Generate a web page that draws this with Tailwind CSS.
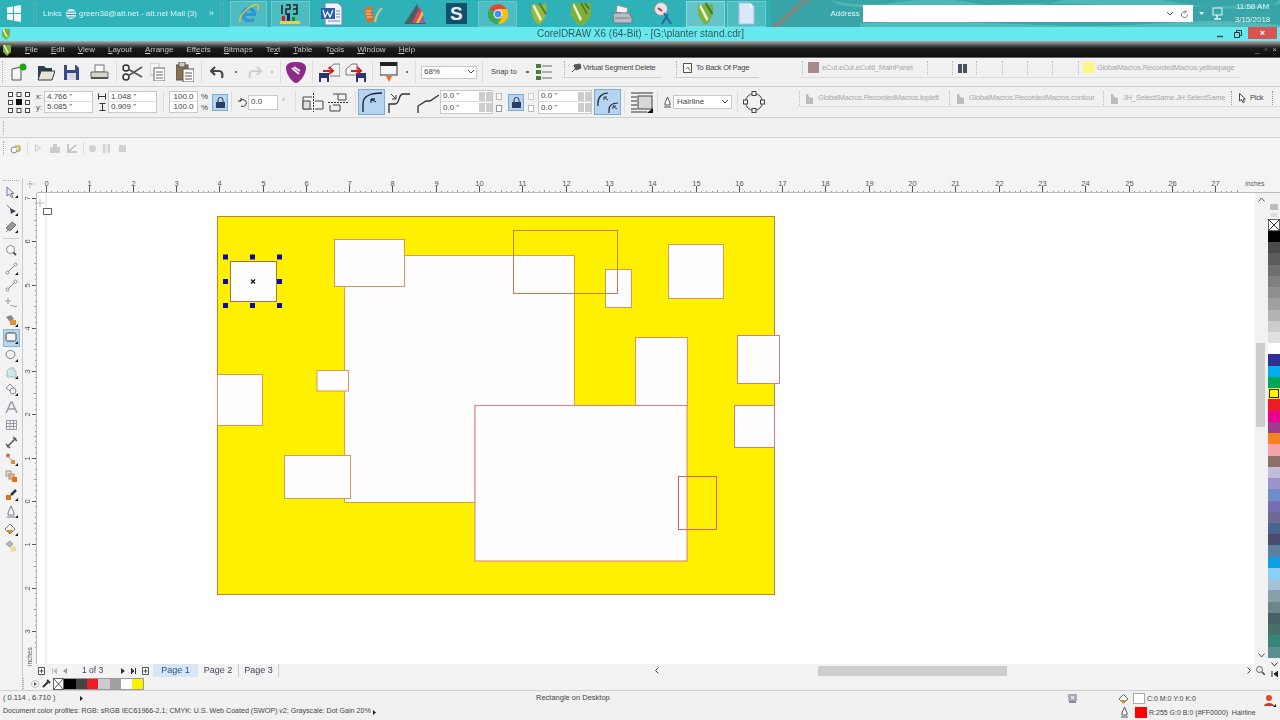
<!DOCTYPE html>
<html lang="en">
<head>
<meta charset="UTF-8">
<title>CorelDRAW X6 - planter stand</title>
<script src="https://cdn.jsdelivr.net/npm/@tailwindcss/browser@4"></script>
</head>
<body class="w-[1280px] h-[720px] overflow-hidden flex flex-col bg-[#f0f0f0] font-['Liberation_Sans',Arial,sans-serif] text-[8px] leading-none text-[#555] blur-[0.35px]">

<!-- windows taskbar -->
<div class="relative h-[27px] shrink-0 flex items-center bg-[#2fb2b7] text-[#dff6f6]">
  <svg class="absolute inset-0" width="1280" height="27" viewBox="0 0 1280 27">
    <rect x="770" width="510" height="27" fill="#3aa5a8"/>
    <path d="M811 0 L779 27 L770 27 L802 0Z" fill="#6d8d88"/>
    <path d="M830 0 Q860 8 900 2 T980 4 T1060 1 T1180 3 T1280 0 V4 Q1200 9 1100 5 T960 8 T840 5Z" fill="#5cc4c4" opacity=".6"/>
    <path d="M860 23 Q940 20 1020 24 T1160 23 T1280 25 V27 H860Z" fill="#62c6c6" opacity=".6"/>
  </svg>
  <div class="relative w-full flex items-center">
    <svg class="ml-[7px] shrink-0" width="14" height="17" viewBox="0 0 14 17"><path d="M0 2.500 6 1.500V8H0ZM7 1.300 14 0V8H7ZM0 9H6V15.500L0 14.500ZM7 9H14V17L7 15.700Z" fill="#f4fbfb"/></svg>
    <div class="ml-[12px] w-[4px] h-[22px] border-x border-dotted border-[#80a8a8]"></div>
    <span class="ml-[6px] w-[18px] text-[8px]">Links</span>
    <svg class="ml-[5px] shrink-0" width="10" height="10" viewBox="0 0 10 10"><circle cx="5" cy="5" r="5" fill="#dff3f7"/><path d="M1 3H9M.5 5.500H9.500M2 8H8" stroke="#3a8fb0"/></svg>
    <span class="ml-[3px] w-[130px] whitespace-nowrap text-[8px]">green38@att.net - att.net Mail (3)</span>
    <span class="w-[11px] text-[9px]">»</span>
    <div class="w-[4px] h-[22px] border-x border-dotted border-[#80a8a8]"></div>
    <div class="ml-[4px] shrink-0 flex items-center">
      <div class="w-[37px] h-[26px] ml-[2px] mr-[2.500px] flex items-center justify-center bg-white/15 border border-white/20">
        <svg width="22" height="22" viewBox="0 0 22 22"><path d="M18 13H7.500C8 16 12.500 17 16.500 14.500V18C11 21 3.500 19 3.500 12 3.500 6 9 3 13.500 4.500 17.500 6 18.500 9.500 18 13ZM7.500 10H14C13.800 6.500 8.500 6.500 7.500 10Z" fill="#2f97d8"/><path d="M2 19C0 14 9 4 18 1.500 21 1 21 4 19.500 7" fill="none" stroke="#f2c230" stroke-width="1.300"/></svg>
      </div>
      <div class="w-[39px] h-[26px] mx-[1.250px] flex items-center justify-center bg-white/15 border border-white/20">
        <svg width="24" height="24" viewBox="0 0 24 24"><rect x="2" y="19" width="20" height="3" fill="#e8d24a"/><rect x="4" y="14" width="3" height="5" fill="#c22"/><rect x="9" y="12" width="3" height="7" fill="#227"/><rect x="14" y="15" width="3" height="4" fill="#282"/><path d="M4 3V12M8 3H12V7H8V12H12M15 3H19V12H15M15 7H19" fill="none" stroke="#222" stroke-width="1.500"/></svg>
      </div>
      <div class="w-[41.500px] flex justify-center">
        <svg width="22" height="24" viewBox="0 0 22 24"><path d="M4 1H17L21 5V23H4Z" fill="#f2f6fb" stroke="#6d86ad"/><rect y="6" width="14" height="11" fill="#2b5ca8"/><path d="M2 8 4 15 6.500 10 9 15 12 8" fill="none" stroke="#fff" stroke-width="1.200"/><path d="M15 9H19M15 12H19M15 15H19M7 19H19" stroke="#6d86ad"/></svg>
      </div>
      <div class="w-[41.500px] flex justify-center">
        <svg width="24" height="24" viewBox="0 0 24 24"><path d="M3 7 11 4 13 19 6 21Z" fill="#d9702c"/><path d="M5 9H10M5 12H10M6 15H11" stroke="#f0d8b0"/><path d="M14 20C15 14 18 9 21 6" fill="none" stroke="#c9c79a" stroke-width="2"/></svg>
      </div>
      <div class="w-[41.500px] flex justify-center">
        <svg width="24" height="24" viewBox="0 0 24 24"><path d="M1 22 14 2 23 22Z" fill="#4c5f62"/><path d="M9 21 17 5 19 9 13 21Z" fill="#e2465e"/><path d="M13 21 19 9 20.500 13 16 21Z" fill="#e8c13c"/><path d="M16 21 20.500 13 22 21Z" fill="#8e5fc0"/></svg>
      </div>
      <div class="w-[41.500px] flex justify-center">
        <div class="w-[21px] h-[21px] bg-[#12506a] flex items-center justify-center text-[#eef] text-[19px] font-bold">S</div>
      </div>
      <div class="w-[39px] h-[26px] mx-[1.250px] flex items-center justify-center bg-white/15 border border-white/15">
        <svg width="20" height="20" viewBox="0 0 20 20"><circle cx="10" cy="10" r="10" fill="#dd4b3e"/><path d="M10 10 1.300 5A10 10 0 0 0 10 20L14 13Z" fill="#3aa757"/><path d="M10 5H19A10 10 0 0 1 10 20L14 13Z" fill="#f4c20d"/><circle cx="10" cy="10" r="4.500" fill="#fff"/><circle cx="10" cy="10" r="3.500" fill="#4a8df0"/></svg>
      </div>
      <div class="w-[41.500px] flex justify-center">
        <svg width="18" height="24" viewBox="0 0 18 24"><path d="M2 2C0 10 3 19 9 23 15 19 18 10 16 1 13 4 6 3 2 2Z" fill="#9ab83c"/><path d="M4 2 12 17 10 19 3 5Z" fill="#f2f4d8"/><path d="M9 1 16 12" stroke="#4e7d2c" stroke-width="2"/></svg>
      </div>
      <div class="w-[41.500px] flex justify-center">
        <svg width="20" height="24" viewBox="0 0 20 24"><path d="M0 1H20V14L13 23H7L0 14Z" fill="#7fae3a"/><path d="M3 1 11 17 9 19 2 4Z" fill="#eef5d5"/><path d="M10 1 16 12M14 1 18 7" stroke="#3f7327" stroke-width="1.500"/></svg>
      </div>
      <div class="w-[41.500px] flex justify-center">
        <svg width="22" height="22" viewBox="0 0 22 22"><path d="M6 2 17 5 16 11 5 9Z" fill="#f0f0f0" stroke="#889"/><path d="M2 10 18 10 21 15V20H3Z" fill="#b8bfc6" stroke="#778"/><path d="M4 15H19" stroke="#778"/></svg>
      </div>
      <div class="w-[41.500px] flex justify-center">
        <svg width="22" height="24" viewBox="0 0 22 24"><circle cx="8" cy="7" r="6.500" fill="#e6e4ea" stroke="#998"/><path d="M5 6 9 9" stroke="#b33" stroke-width="2"/><path d="M11 11 18 22M15 12 9 22" stroke="#2b66b0" stroke-width="2"/></svg>
      </div>
      <div class="w-[39px] h-[26px] mx-[1.250px] flex items-center justify-center bg-white/25 border border-white/30">
        <svg width="19" height="24" viewBox="0 0 18 24"><path d="M2 2C0 10 3 19 9 23 15 19 18 10 16 1 13 4 6 3 2 2Z" fill="#7fb23c"/><path d="M4 2 12 17 10 19 3 5Z" fill="#f2f4d8"/><path d="M9 1 16 12" stroke="#3f7327" stroke-width="2"/></svg>
      </div>
      <div class="w-[39px] h-[26px] mx-[1.250px] flex items-center justify-center bg-white/15 border border-white/20">
        <svg width="17" height="23" viewBox="0 0 17 23"><path d="M1 1H12L16 5V22H1Z" fill="#dbe6f8" stroke="#a9c0e4"/><path d="M12 1V5H16Z" fill="#fff"/></svg>
      </div>
    </div>
    <span class="ml-[63px] w-[28px] text-[8px] whitespace-nowrap">Address</span>
    <div class="ml-[4px] w-[330px] shrink-0 h-[17px] bg-white flex items-center justify-end pr-[5px] gap-[8px] text-[#666]">
      <svg width="6" height="4" viewBox="0 0 6 4"><path d="M0 0 3 3 6 0" fill="none" stroke="#555"/></svg>
      <svg width="7" height="8" viewBox="0 0 7 8"><path d="M5 2A3 3 0 1 0 6.500 4.500M4 .5 5.500 2 3.500 3.500" fill="none" stroke="#777"/></svg>
    </div>
    <svg class="ml-[6px] shrink-0" width="5" height="3" viewBox="0 0 5 3"><path d="M0 0H5L2.500 3Z" fill="#dff"/></svg>
    <svg class="ml-[8px] shrink-0" width="12" height="13" viewBox="0 0 12 13"><rect x="1" y="1" width="9" height="7" fill="none" stroke="#e8f8f8"/><path d="M5 8V12M2 12H9" stroke="#e8f8f8" stroke-width="1.500"/></svg>
    <div class="ml-[11px] flex flex-col items-center gap-[5px] w-[36px] text-[8px] whitespace-nowrap"><span>11:58 AM</span><span>3/15/2018</span></div>
  </div>
</div>

<!-- window title -->
<div class="relative h-[14px] shrink-0 flex items-center bg-[#66e9ee] text-[#33595c]">
  <svg class="ml-[2px] shrink-0" width="8" height="11" viewBox="0 0 8 11"><path d="M0 0H8V7L4 11 0 7Z" fill="#7fae3a"/><path d="M1 0 5 8" stroke="#eef5d5" stroke-width="1.500"/></svg>
  <span class="ml-[527px] text-[10px] whitespace-nowrap">CorelDRAW X6 (64-Bit) - [G:\planter stand.cdr]</span>
  <svg width="6" height="8" viewBox="0 0 6 8" class="ml-auto mr-[11px]"><path d="M0 6.500H6" stroke="#444" stroke-width="1.500"/></svg>
  <svg width="8" height="8" viewBox="0 0 8 8" class="mr-[6px]"><path d="M.5 2.500H5.500V7.500H.5ZM2.500 2.500V.5H7.500V5.500H5.500" fill="none" stroke="#333"/></svg>
  <div class="w-[29px] h-[12px] mr-[3px] self-start bg-[#d9534f] flex items-center justify-center text-white text-[9px] font-bold">×</div>
</div>

<!-- menu bar -->
<div class="h-[17px] shrink-0 flex items-center gap-[13px] bg-gradient-to-b from-[#b0b0b0] via-[#1c1c1c] to-[#0d0d0d] via-45% text-[#c8c8c8] pl-[3px] pt-[2px] text-[8px] relative border-b border-[#666]">
  <svg class="-mr-[4px] shrink-0" width="8" height="11" viewBox="0 0 8 11"><path d="M0 0H8V7L4 11 0 7Z" fill="#7fae3a"/><path d="M1 0 5 8" stroke="#eef5d5" stroke-width="1.500"/></svg>
  <span class="ml-[5px]"><u>F</u>ile</span><span><u>E</u>dit</span><span><u>V</u>iew</span><span><u>L</u>ayout</span><span><u>A</u>rrange</span><span>Eff<u>e</u>cts</span><span><u>B</u>itmaps</span><span>Te<u>x</u>t</span><span><u>T</u>able</span><span>T<u>o</u>ols</span><span><u>W</u>indow</span><span><u>H</u>elp</span>
  <div class="ml-auto mr-[3px] flex items-center gap-[5px] text-[#aaa]"><span>_</span><span>▫</span><span>×</span></div>
</div>

<!-- standard toolbar -->
<div class="h-[29px] shrink-0 flex items-center border-b border-[#cfcfcf] bg-[#f1f1f1]">
  <div class="ml-[2px] w-px h-[22px] border-l border-dotted border-[#aaa]"></div>
  <svg class="ml-[7px] shrink-0" width="18" height="18" viewBox="0 0 18 18"><path d="M2 6 11 4V17H2Z" fill="#f5f5f5" stroke="#555"/><circle cx="13" cy="4" r="3.500" fill="#1ca51c"/></svg>
  <svg class="ml-[9px] shrink-0" width="18" height="17" viewBox="0 0 18 17"><path d="M1 2H7L9 4H15V7H4L1 16Z" fill="#2b3d52"/><path d="M4 7H18L15 16H1Z" fill="#e8e2d0" stroke="#2b3d52"/></svg>
  <svg class="ml-[9px] shrink-0" width="15" height="15" viewBox="0 0 15 15"><path d="M0 0H12L15 3V15H0Z" fill="#3a4a88"/><rect x="3" y="0" width="8" height="5" fill="#f4f4f4"/><rect x="3" y="8" width="9" height="7" fill="#d8d8e8"/></svg>
  <svg class="ml-[11px] shrink-0" width="19" height="16" viewBox="0 0 19 16"><rect x="5" y="1" width="9" height="7" fill="#fff" stroke="#777"/><path d="M1 8H18V14H1Z" fill="#d7d6c2" stroke="#666"/><rect x="1" y="13" width="17" height="2" fill="#555"/></svg>
  <div class="ml-[7px] w-px h-[22px] bg-[#ddd]"></div>
  <svg class="ml-[5px] shrink-0" width="21" height="17" viewBox="0 0 21 17"><circle cx="4" cy="4" r="3" fill="none" stroke="#333" stroke-width="1.500"/><circle cx="4" cy="13" r="3" fill="none" stroke="#333" stroke-width="1.500"/><path d="M6 5 20 13M6 12 20 3" stroke="#555" stroke-width="1.500"/></svg>
  <svg class="ml-[7px] shrink-0" width="15" height="18" viewBox="0 0 15 18"><rect x="0" y="0" width="9" height="12" fill="#f4f4f4" stroke="#bbb"/><rect x="4" y="5" width="11" height="13" fill="#fff" stroke="#666"/><path d="M6 9H13M6 12H13M6 15H13" stroke="#666"/></svg>
  <svg class="ml-[11px] shrink-0" width="18" height="20" viewBox="0 0 18 20"><rect x="0" y="3" width="12" height="15" fill="#8c6f52" stroke="#554"/><rect x="3" y="0" width="6" height="5" fill="#ccc" stroke="#555"/><rect x="7" y="7" width="11" height="13" fill="#fff" stroke="#555"/><path d="M9 11H16M9 14H16M9 17H16" stroke="#555"/></svg>
  <div class="ml-[7px] w-px h-[22px] bg-[#ddd]"></div>
  <svg class="ml-[8px] shrink-0" width="14" height="13" viewBox="0 0 14 13"><path d="M5 1 1 5 5 9M1 5H9C12 5 13 8 12 12" fill="none" stroke="#444" stroke-width="2.200"/></svg>
  <span class="ml-[11px] w-[2px] h-[2px] bg-[#777]"></span>
  <svg class="ml-[11px] shrink-0" width="14" height="13" viewBox="0 0 14 13"><path d="M9 1 13 5 9 9M13 5H5C2 5 1 8 2 12" fill="none" stroke="#cfcfcf" stroke-width="2.200"/></svg>
  <span class="ml-[9px] w-[2px] h-[2px] bg-[#bbb]"></span>
  <div class="ml-[7px] w-px h-[22px] bg-[#ddd]"></div>
  <svg class="ml-[5px] shrink-0" width="20" height="21" viewBox="0 0 20 21"><path d="M10 0C15 0 20 1 20 6 20 13 13 21 10 21 7 21 0 13 0 6 0 1 5 0 10 0Z" fill="#8d2a85"/><path d="M6 6 13 12M8 5 14 9" stroke="#f3e5f3" stroke-width="2"/></svg>
  <div class="ml-[6px] w-px h-[22px] bg-[#ddd]"></div>
  <svg class="ml-[5px] shrink-0" width="22" height="19" viewBox="0 0 22 19"><path d="M10 6 16 1H22V13H12" fill="#f3f3f3" stroke="#777"/><rect x="1" y="10" width="10" height="9" fill="#2d3570"/><rect x="3" y="15" width="6" height="4" fill="#eee"/><path d="M5 8H14M11 4 15 8 11 11" fill="none" stroke="#d21f1f" stroke-width="2"/></svg>
  <svg class="ml-[5px] shrink-0" width="22" height="19" viewBox="0 0 22 19"><path d="M1 6 7 1H12V12H1Z" fill="#f3f3f3" stroke="#777"/><rect x="11" y="10" width="10" height="9" fill="#2d3570"/><rect x="13" y="15" width="6" height="4" fill="#eee"/><path d="M6 8H15M12 4 16 8 12 11" fill="none" stroke="#d21f1f" stroke-width="2"/></svg>
  <div class="ml-[5px] w-px h-[22px] bg-[#ddd]"></div>
  <svg class="ml-[7px] shrink-0" width="18" height="20" viewBox="0 0 18 20"><rect x="0" y="0" width="17" height="13" fill="#f4f4f4" stroke="#333"/><rect x="0" y="0" width="17" height="4" fill="#222"/><path d="M6 14H12L9 20Z" fill="#ef6b22"/></svg>
  <span class="ml-[8px] w-[2px] h-[2px] bg-[#777]"></span>
  <div class="ml-[7px] w-px h-[22px] bg-[#ddd]"></div>
  <div class="ml-[5px] w-[56px] shrink-0 h-[13px] bg-white border border-[#c8c8c8] flex items-center justify-between px-[2px] text-[8px] text-[#444]"><span>68%</span><svg width="6" height="4" viewBox="0 0 6 4"><path d="M0 0 3 3 6 0" fill="none" stroke="#444"/></svg></div>
  <div class="ml-[5px] w-px h-[22px] bg-[#ddd]"></div>
  <span class="ml-[8px] w-[25px] text-[#444] text-[7.500px] whitespace-nowrap">Snap to</span>
  <span class="ml-[10px] w-[3px] h-[2px] bg-[#666]"></span>
  <svg class="ml-[7px] shrink-0" width="16" height="18" viewBox="0 0 16 18"><path d="M0 1H5V5H0ZM0 7H5V11H0ZM0 13H5V17H0Z" fill="#4a7c3c"/><path d="M6 3H16M6 9H16M6 15H16" stroke="#666"/></svg>
  <div class="self-start ml-[10px] h-[20px] border-b border-[#ccc] w-[99px] shrink-0 flex items-center pl-[2px] text-[#444] text-[7.500px] tracking-[-0.2px]">
    <div class="w-px h-[14px] border-l border-dotted border-[#aaa]"></div>
    <svg class="ml-[6px] shrink-0" width="11" height="10" viewBox="0 0 11 10"><path d="M1 9 5 5M3 2 9 1 10 5 5 7Z" fill="#555" stroke="#555"/></svg>
    <span class="ml-[1px] whitespace-nowrap">Virtual Segment Delete</span>
  </div>
  <div class="self-start ml-[13px] h-[20px] border-b border-[#ccc] w-[85px] shrink-0 flex items-center pl-[2px] text-[#444] text-[7.500px] tracking-[-0.2px]">
    <div class="w-px h-[14px] border-l border-dotted border-[#aaa]"></div>
    <svg class="ml-[6px] shrink-0" width="9" height="10" viewBox="0 0 9 10"><rect x=".5" y=".5" width="8" height="9" fill="#fff" stroke="#555"/><path d="M3 6 5 4 7 8" fill="none" stroke="#777"/></svg>
    <span class="ml-[4px] whitespace-nowrap">To Back Of Page</span>
  </div>
  <div class="self-start ml-[40px] h-[20px] border-b border-[#ddd] w-[442px] shrink-0 flex items-center pl-[3px] text-[#a8a8a8] text-[7.500px] tracking-[-0.2px]">
    <div class="w-px h-[14px] border-l border-dotted border-[#bbb]"></div>
    <div class="ml-[5px] w-[11px] h-[11px] shrink-0 bg-[#a98a8c]"></div>
    <span class="ml-[3px] w-[105px] shrink-0 whitespace-nowrap">eCut.eCut.eCut6_MainPanel</span>
    <div class="w-px h-[14px] border-l border-dotted border-[#bbb]"></div>
    <div class="ml-[24px] w-px h-[14px] border-l border-dotted border-[#bbb]"></div>
    <svg class="ml-[5px] shrink-0" width="9" height="10" viewBox="0 0 9 10"><path d="M0 1H4V10H0ZM5 1H9V10H5Z" fill="#4a4f60"/></svg>
    <div class="ml-[9px] w-px h-[14px] border-l border-dotted border-[#bbb]"></div>
    <div class="ml-[25px] w-px h-[14px] border-l border-dotted border-[#bbb]"></div>
    <div class="ml-[24px] w-px h-[14px] border-l border-dotted border-[#bbb]"></div>
    <div class="ml-[24px] w-px h-[14px] border-l border-dotted border-[#bbb]"></div>
    <div class="ml-[25px] w-px h-[14px] border-l border-dotted border-[#bbb]"></div>
    <div class="ml-[4px] w-[11px] h-[11px] shrink-0 bg-[#fdf77e]"></div>
    <span class="ml-[3px] whitespace-nowrap">GlobalMacros.RecordedMacros.yellowpage</span>
  </div>
</div>

<!-- property bar -->
<div class="h-[31px] shrink-0 flex items-center border-b border-[#cfcfcf] bg-[#f1f1f1] text-[#444]">
  <svg class="ml-[8px] shrink-0" width="22" height="21" viewBox="0 0 22 21"><g fill="#fff" stroke="#444"><rect x=".5" y=".5" width="4" height="4"/><rect x="9" y=".5" width="4" height="4"/><rect x="17.500" y=".5" width="4" height="4"/><rect x=".5" y="8.500" width="4" height="4"/><rect x="17.500" y="8.500" width="4" height="4"/><rect x=".5" y="16.500" width="4" height="4"/><rect x="9" y="16.500" width="4" height="4"/><rect x="17.500" y="16.500" width="4" height="4"/></g><rect x="8" y="7" width="6" height="6" fill="#111"/></svg>
  <div class="ml-[6px] flex flex-col justify-center gap-[3px] text-[7.500px] w-[8px]"><span>x:</span><span>y:</span></div>
  <div class="w-[49px] flex flex-col border border-[#c8c8c8] bg-white text-[8px] divide-y divide-[#ddd]"><span class="h-[10px] flex items-center pl-[2px]">4.766 "</span><span class="h-[10px] flex items-center pl-[2px]">5.085 "</span></div>
  <div class="ml-[4px] w-[10px] flex flex-col items-center gap-[3px]"><svg width="8" height="7" viewBox="0 0 8 7"><path d="M0 3.500H8M.5 .5V6.500M7.500 .5V6.500" stroke="#333"/></svg><svg width="7" height="8" viewBox="0 0 7 8"><path d="M3.500 0V8M.5 .5H6.500M.5 7.500H6.500" stroke="#333"/></svg></div>
  <div class="ml-[1px] w-[49px] flex flex-col border border-[#c8c8c8] bg-white text-[8px] divide-y divide-[#ddd]"><span class="h-[10px] flex items-center pl-[2px]">1.048 "</span><span class="h-[10px] flex items-center pl-[2px]">0.909 "</span></div>
  <div class="ml-[6px] w-px h-[22px] bg-[#ddd]"></div>
  <div class="ml-[5px] w-[29px] flex flex-col border border-[#c8c8c8] bg-white text-[8px] divide-y divide-[#ddd]"><span class="h-[10px] flex items-center justify-center">100.0</span><span class="h-[10px] flex items-center justify-center">100.0</span></div>
  <div class="ml-[3px] flex flex-col gap-[3px] text-[8px] w-[8px]"><span>%</span><span>%</span></div>
  <div class="ml-[3px] w-[16px] h-[17px] bg-[#b5d4f1] border border-[#7fa9cd] flex items-center justify-center"><svg width="9" height="11" viewBox="0 0 9 11"><path d="M2 5V3A2.500 2.500 0 0 1 7 3V5" fill="none" stroke="#334"/><rect y="5" width="9" height="6" fill="#2e3f66"/></svg></div>
  <div class="ml-[3px] w-px h-[22px] bg-[#ddd]"></div>
  <svg class="ml-[6px] shrink-0" width="9" height="9" viewBox="0 0 9 9"><path d="M2 3A3.500 3.500 0 1 1 3 8M0 3H3V0" fill="none" stroke="#333"/></svg>
  <div class="ml-[1px] w-[30px] h-[15px] border border-[#c8c8c8] bg-white flex items-center pl-[2px] text-[8px]">0.0</div>
  <span class="ml-[4px] w-[4px] text-[#888]">°</span>
  <div class="ml-[9px] w-px h-[22px] bg-[#ddd]"></div>
  <svg class="ml-[6px] shrink-0" width="22" height="19" viewBox="0 0 22 19"><path d="M10 4H1V16H10M13 8H21V16H13" fill="none" stroke="#444"/><path d="M11.500 0V19" stroke="#333" stroke-dasharray="2 1"/><path d="M1 8H8V16H1Z" fill="#ddd" stroke="#444"/></svg>
  <svg class="ml-[4px] shrink-0" width="20" height="19" viewBox="0 0 20 19"><path d="M5 1H18V7H10V1M5 12H12V18H2V12" fill="none" stroke="#444"/><path d="M0 9.500H20" stroke="#333" stroke-dasharray="2 1"/></svg>
  <div class="ml-[7px] w-px h-[22px] bg-[#ddd]"></div>
  <div class="ml-[2px] w-[27px] h-[26px] bg-[#b5d4f1] border border-[#7fa9cd] flex items-center justify-center"><svg width="20" height="20" viewBox="0 0 20 20"><path d="M1 20V12C1 5 6 1 20 1" fill="none" stroke="#223" stroke-width="1.400"/><path d="M9 7 14 10M9 7V11M9 7H13" stroke="#334" stroke-width="1.300"/></svg></div>
  <svg class="ml-[3px] shrink-0" width="22" height="21" viewBox="0 0 22 21"><path d="M1 21V12H7C12 12 10 2 15 2H22" fill="none" stroke="#333" stroke-width="1.300"/><path d="M3 2 8 7M8 3V7H4" fill="none" stroke="#333"/></svg>
  <svg class="ml-[7px] shrink-0" width="22" height="21" viewBox="0 0 22 21"><path d="M1 21V14L9 9H13L22 3" fill="none" stroke="#333" stroke-width="1.300"/></svg>
  <div class="ml-[1px] w-[53px] flex flex-col border border-[#c8c8c8] bg-white text-[8px] divide-y divide-[#ddd]"><span class="h-[11px] flex items-center pl-[2px] justify-between">0.0 "<span class="flex gap-px"><i class="w-[6px] h-[9px] bg-[#ccc]"></i><i class="w-[6px] h-[9px] bg-[#ccc]"></i></span></span><span class="h-[11px] flex items-center pl-[2px] justify-between">0.0 "<span class="flex gap-px"><i class="w-[6px] h-[9px] bg-[#ccc]"></i><i class="w-[6px] h-[9px] bg-[#ccc]"></i></span></span></div>
  <div class="ml-[3px] flex flex-col gap-[5px]"><i class="w-[6px] h-[7px] border border-[#bbb] bg-white"></i><i class="w-[6px] h-[7px] border border-[#999] bg-white"></i></div>
  <div class="ml-[6px] w-[16px] h-[17px] bg-[#b5d4f1] border border-[#7fa9cd] flex items-center justify-center"><svg width="9" height="11" viewBox="0 0 9 11"><path d="M2 5V3A2.500 2.500 0 0 1 7 3V5" fill="none" stroke="#334"/><rect y="5" width="9" height="6" fill="#2e3f66"/></svg></div>
  <div class="ml-[4px] flex flex-col gap-[5px]"><i class="w-[6px] h-[7px] border border-[#ccc] bg-white"></i><i class="w-[6px] h-[7px] border border-[#bbb] bg-white"></i></div>
  <div class="ml-[4px] w-[54px] flex flex-col border border-[#c8c8c8] bg-white text-[8px] divide-y divide-[#ddd]"><span class="h-[11px] flex items-center pl-[2px] justify-between">0.0 "<span class="flex gap-px"><i class="w-[6px] h-[9px] bg-[#ccc]"></i><i class="w-[6px] h-[9px] bg-[#ccc]"></i></span></span><span class="h-[11px] flex items-center pl-[2px] justify-between">0.0 "<span class="flex gap-px"><i class="w-[6px] h-[9px] bg-[#ccc]"></i><i class="w-[6px] h-[9px] bg-[#ccc]"></i></span></span></div>
  <div class="ml-[2px] w-[27px] h-[26px] bg-[#b5d4f1] border border-[#7fa9cd] flex items-center justify-center"><svg width="24" height="22" viewBox="0 0 24 22"><path d="M2 15V12C2 6 6 2 12 2M13 22V19C13 15 16 12 22 12" fill="none" stroke="#223" stroke-width="1.200"/><path d="M8 6 12 9M8 6V9M8 6H11M17 15 21 18M17 15V18M17 15H20" stroke="#334"/></svg></div>
  <div class="ml-[3px] w-px h-[22px] bg-[#ddd]"></div>
  <svg class="ml-[6px] shrink-0" width="22" height="21" viewBox="0 0 22 21"><rect x="7" y="4" width="14" height="13" fill="#d8d8d8" stroke="#444"/><path d="M0 1H22M0 5H6M0 9H6M0 13H6M0 17H6M0 20H16" stroke="#333"/><path d="M16 21 22 16V21Z" fill="#111"/></svg>
  <div class="ml-[4px] w-px h-[22px] bg-[#ddd]"></div>
  <svg class="ml-[6px] shrink-0" width="7" height="11" viewBox="0 0 7 11"><path d="M3.500 0 6 6V8H1V6ZM0 10H7" fill="#fff" stroke="#555"/></svg>
  <div class="ml-[2px] w-[59px] h-[14px] border border-[#c8c8c8] bg-white flex items-center justify-between px-[3px] text-[8px]"><span>Hairline</span><svg width="6" height="4" viewBox="0 0 6 4"><path d="M0 0 3 3 6 0" fill="none" stroke="#444"/></svg></div>
  <div class="ml-[5px] w-px h-[22px] bg-[#ddd]"></div>
  <svg class="ml-[5px] shrink-0" width="22" height="22" viewBox="0 0 22 22"><circle cx="11" cy="11" r="8.500" fill="none" stroke="#444"/><g fill="#f4f4f4" stroke="#444"><rect x="9" y=".5" width="4" height="4"/><rect x="9" y="17.500" width="4" height="4"/><rect x=".5" y="9" width="4" height="4"/><rect x="17.500" y="9" width="4" height="4"/></g></svg>
  <div class="self-start mt-[3px] ml-[32px] h-[17px] border-b border-[#ddd] w-[483px] shrink-0 flex items-center pl-[2px] text-[#a8a8a8] text-[7.500px] tracking-[-0.2px]">
    <div class="w-px h-[14px] border-l border-dotted border-[#bbb]"></div>
    <svg class="ml-[5px] shrink-0" width="9" height="11" viewBox="0 0 9 11"><path d="M1 1H3L4 4 8 5V11H1Z" fill="#bbb"/></svg>
    <span class="ml-[4px] w-[122px] shrink-0 whitespace-nowrap">GlobalMacros.RecordedMacros.topleft</span>
    <div class="ml-[9px] w-px h-[14px] border-l border-dotted border-[#bbb]"></div>
    <svg class="ml-[6px] shrink-0" width="9" height="11" viewBox="0 0 9 11"><path d="M1 1H3L4 4 8 5V11H1Z" fill="#bbb"/></svg>
    <span class="ml-[4px] w-[125px] shrink-0 whitespace-nowrap">GlobalMacros.RecordedMacros.contour</span>
    <div class="ml-[9px] w-px h-[14px] border-l border-dotted border-[#bbb]"></div>
    <svg class="ml-[6px] shrink-0" width="9" height="11" viewBox="0 0 9 11"><path d="M1 1H3L4 4 8 5V11H1Z" fill="#bbb"/></svg>
    <span class="ml-[4px] w-[98px] shrink-0 whitespace-nowrap">JH_SelectSame.JH.SelectSame</span>
    <div class="ml-[10px] w-px h-[14px] border-l border-dotted border-[#999]"></div>
    <svg class="ml-[7px] shrink-0" width="7" height="10" viewBox="0 0 7 10"><path d="M.5 .5V8L2.500 6.500 4 9.500 5.500 9 4 6H6.500Z" fill="#fff" stroke="#444"/></svg>
    <span class="ml-[4px] w-[13px] text-[#444]">Pick</span>
    <div class="ml-[9px] w-px h-[14px] border-l border-dotted border-[#999]"></div>
  </div>
</div>

<!-- empty toolbar row -->
<div class="h-[20px] shrink-0 border-b border-[#d4d4d4] bg-[#f1f1f1] pl-[3px] flex items-center"><div class="w-px h-[14px] border-l border-dotted border-[#aaa]"></div></div>

<!-- macro toolbar -->
<div class="h-[20px] shrink-0 flex items-center bg-[#f4f4f4]">
  <div class="ml-[3px] w-px h-[14px] border-l border-dotted border-[#aaa]"></div>
  <svg class="ml-[6px] shrink-0" width="11" height="11" viewBox="0 0 11 11"><circle cx="4" cy="7" r="3" fill="none" stroke="#889"/><path d="M5 3H10V8H7" fill="#e8d98a" stroke="#a89a50"/></svg>
  <div class="ml-[6px] w-px h-[13px] bg-[#ddd]"></div>
  <svg class="ml-[7px] shrink-0" width="6" height="8" viewBox="0 0 6 8"><path d="M.5 .5 5.500 4 .5 7.500Z" fill="#eee" stroke="#ccc"/></svg>
  <svg class="ml-[9px] shrink-0" width="10" height="9" viewBox="0 0 10 9"><path d="M0 3H3V0H7V3H10V9H0Z" fill="#ccc"/></svg>
  <svg class="ml-[7px] shrink-0" width="10" height="9" viewBox="0 0 10 9"><path d="M1 0V8H10M2 7 9 1" fill="none" stroke="#bbb" stroke-width="1.500"/></svg>
  <div class="ml-[6px] w-px h-[13px] bg-[#ddd]"></div>
  <span class="ml-[5px] w-[7px] h-[7px] rounded-full bg-[#d0d0d0]"></span>
  <span class="ml-[7px] w-[7px] h-[9px] border-x-2 border-[#d0d0d0] bg-[#e8e8e8]"></span>
  <span class="ml-[9px] w-[7px] h-[7px] bg-[#d0d0d0]"></span>
</div>

<!-- empty band above the rulers -->
<div class="h-[20px] shrink-0 bg-[#f4f4f4] border-t border-[#f9f9f9]"></div>

<!-- workspace -->
<div class="h-[512px] shrink-0 flex">
  <!-- toolbox -->
  <div class="w-[23px] shrink-0 border-r border-[#c9c9c9] bg-[#f3f3f3] flex flex-col items-center pt-[2px]">
    <div class="w-[16px] h-px border-t border-dotted border-[#aaa]"></div>
    <div class="mt-[3px] flex flex-col items-center">
      <div class="w-[17px] h-[17.400px] flex items-center justify-center"><svg width="13" height="13" viewBox="0 0 13 13"><path d="M2 1V10L4.500 8 6.500 11.500 8 11 6 7.500H9Z" fill="#eef" stroke="#778"/><path d="M10 12H13V9Z" fill="#111"/></svg></div>
      <div class="w-[17px] h-[17.400px] flex items-center justify-center"><svg width="13" height="13" viewBox="0 0 13 13"><path d="M2 1 6 5" stroke="#777"/><path d="M5 4 11 7 6 10Z" fill="#445"/><path d="M10 12H13V9Z" fill="#111"/></svg></div>
      <div class="w-[17px] h-[17.400px] flex items-center justify-center"><svg width="13" height="13" viewBox="0 0 13 13"><path d="M1 7 7 1 11 4 5 10Z" fill="#9a9a90" stroke="#777"/><path d="M1 11 4 8" stroke="#777"/><path d="M10 12H13V9Z" fill="#111"/></svg></div>
      <div class="w-[16px] h-px bg-[#ccc] my-[2px]"></div>
      <div class="mt-[1px] w-[17px] h-[17.400px] flex items-center justify-center"><svg width="13" height="13" viewBox="0 0 13 13"><circle cx="5.500" cy="5.500" r="4" fill="#f8f8f8" stroke="#888"/><path d="M8.500 8.500 11 11" stroke="#555" stroke-width="2"/></svg></div>
      <div class="w-[17px] h-[17.400px] flex items-center justify-center"><svg width="13" height="13" viewBox="0 0 13 13"><path d="M2 11 11 2" stroke="#888"/><circle cx="2.500" cy="10.500" r="1.500" fill="#fff" stroke="#888"/><circle cx="10.500" cy="2.500" r="1.500" fill="#fff" stroke="#888"/><path d="M10 13H13V10Z" fill="#111"/></svg></div>
      <div class="w-[17px] h-[17.400px] flex items-center justify-center"><svg width="13" height="13" viewBox="0 0 13 13"><path d="M2 11 11 2" stroke="#888"/><circle cx="2.500" cy="10.500" r="1.500" fill="#fff" stroke="#888"/><circle cx="10.500" cy="2.500" r="1.500" fill="#fff" stroke="#888"/></svg></div>
      <div class="w-[17px] h-[17.400px] flex items-center justify-center"><svg width="13" height="13" viewBox="0 0 13 13"><path d="M3 1V7M0 4H6M5 9C7 7 9 11 12 9" fill="none" stroke="#999"/></svg></div>
      <div class="w-[17px] h-[17.400px] flex items-center justify-center"><svg width="13" height="13" viewBox="0 0 13 13"><path d="M1 3 6 1 9 5 5 8Z" fill="#888"/><rect x="5" y="6" width="6" height="5" fill="#e0903c"/><path d="M10 13H13V10Z" fill="#111"/></svg></div>
      <div class="w-[17px] h-[17.400px] flex items-center justify-center bg-[#b5d4f1] border border-[#8bb5d8]"><svg width="13" height="13" viewBox="0 0 13 13"><rect x="1" y="2" width="10" height="8" rx="1.500" fill="#f5f5f5" stroke="#445"/><path d="M10 13H13V10Z" fill="#111"/></svg></div>
      <div class="w-[17px] h-[17.400px] flex items-center justify-center"><svg width="13" height="13" viewBox="0 0 13 13"><ellipse cx="5.500" cy="5.500" rx="4.500" ry="4" fill="#f5f5f5" stroke="#778"/><path d="M10 13H13V10Z" fill="#111"/></svg></div>
      <div class="w-[17px] h-[17.400px] flex items-center justify-center"><svg width="13" height="13" viewBox="0 0 13 13"><path d="M2 5 5 2H9V5H11V11H2Z" fill="#cfeae4" stroke="#9bc"/><path d="M10 13H13V10Z" fill="#111"/></svg></div>
      <div class="w-[17px] h-[17.400px] flex items-center justify-center"><svg width="13" height="13" viewBox="0 0 13 13"><path d="M1 5 5 1 9 5 5 8Z" fill="#f5f5f5" stroke="#889"/><circle cx="8" cy="8" r="3" fill="#f5f5f5" stroke="#889"/><path d="M10 13H13V10Z" fill="#111"/></svg></div>
      <div class="w-[17px] h-[17.400px] flex items-center justify-center"><svg width="13" height="13" viewBox="0 0 13 13"><path d="M1 12 6 1H7L12 12M3 8H10" fill="none" stroke="#99a" stroke-width="1.500"/></svg></div>
      <div class="w-[17px] h-[17.400px] flex items-center justify-center"><svg width="11" height="10" viewBox="0 0 11 10"><path d="M.5 .5H10.500V9.500H.5ZM.5 3.500H10.500M.5 6.500H10.500M4 .5V9.500M7.500 .5V9.500" fill="#f5f5f5" stroke="#99a"/></svg></div>
      <div class="w-[17px] h-[17.400px] flex items-center justify-center"><svg width="13" height="13" viewBox="0 0 13 13"><path d="M2 11 11 2M1 8 5 12M8 1 12 5" stroke="#555" stroke-width="1.500"/></svg></div>
      <div class="w-[17px] h-[17.400px] flex items-center justify-center"><svg width="13" height="13" viewBox="0 0 13 13"><circle cx="3" cy="2.500" r="2" fill="#d06a50"/><path d="M3 3 8 9" stroke="#999"/><rect x="6" y="7" width="4" height="4" fill="#e0903c"/><path d="M10 13H13V10Z" fill="#111"/></svg></div>
      <div class="w-[17px] h-[17.400px] flex items-center justify-center"><svg width="13" height="13" viewBox="0 0 13 13"><rect x="1" y="1" width="5" height="5" fill="#ddd" stroke="#999"/><rect x="4" y="4" width="5" height="5" fill="#e8b890" stroke="#b86"/><rect x="7" y="7" width="5" height="5" fill="#e0701c"/></svg></div>
      <div class="w-[17px] h-[17.400px] flex items-center justify-center"><svg width="13" height="13" viewBox="0 0 13 13"><path d="M6 7 11 2" stroke="#333" stroke-width="2.500"/><rect x="1" y="7" width="5" height="5" fill="#e0701c"/><path d="M10 13H13V10Z" fill="#111"/></svg></div>
      <div class="w-[17px] h-[17.400px] flex items-center justify-center"><svg width="13" height="13" viewBox="0 0 13 13"><path d="M6 1 9 8V10H3V8ZM2 12H10" fill="#f5f5f5" stroke="#778"/><path d="M10 13H13V10Z" fill="#111"/></svg></div>
      <div class="w-[17px] h-[17.400px] flex items-center justify-center"><svg width="14" height="13" viewBox="0 0 14 13"><path d="M1 6 6 1 11 6 6 11Z" fill="#f5f5f5" stroke="#776"/><path d="M3 7H9L6 11Z" fill="#d88b30"/><path d="M11 13H14V10Z" fill="#111"/></svg></div>
      <div class="w-[17px] h-[17.400px] flex items-center justify-center"><svg width="13" height="13" viewBox="0 0 13 13"><path d="M1 4 5 1 8 4 5 7Z" fill="#bbb" stroke="#999"/><path d="M5 8 10 6 12 10 7 12Z" fill="#eedd88"/></svg></div>
    </div>
  </div>

  <div class="flex-1 min-w-0 flex flex-col">
    <!-- horizontal ruler -->
    <svg id="hruler" class="shrink-0 bg-[#f4f4f4]" width="1257" height="15" viewBox="23 178 1257 15"></svg>
    <div class="h-[484px] flex">
      <!-- vertical ruler -->
      <svg id="vruler" class="shrink-0 bg-[#f4f4f4]" width="14" height="484" viewBox="23 193 14 484"></svg>
      <div class="flex-1 min-w-0 flex flex-col">
        <div class="h-[471px] flex">
          <!-- drawing page -->
          <svg class="shrink-0 bg-white" width="1218" height="471" viewBox="37 193 1218 471">
            <rect x="45" y="193" width="2" height="471" fill="#efefef"/>
            <path d="M37 203H44M40 199V207" stroke="#bbb"/>
            <rect x="43.500" y="208.500" width="8" height="6" fill="#fff" stroke="#666"/>
            <rect x="217.500" y="216.500" width="557" height="378" fill="#fff000" stroke="#c0803a"/>
            <path d="M344.500 286V502.500H475V405.500H574.500V255.500H405" fill="#fffdfd" stroke="#dca03c"/>
            <g fill="#fffdfd" stroke="#d9975a">
              <rect x="334.500" y="239.500" width="70" height="47"/>
              <rect x="605.500" y="269.500" width="26" height="38"/>
              <rect x="668.500" y="244.500" width="55" height="54"/>
              <rect x="635.500" y="337.500" width="52" height="69"/>
              <rect x="284.500" y="455.500" width="66" height="43"/>
              <rect x="217.500" y="374.500" width="45" height="51"/>
              <rect x="317" y="370.500" width="31.500" height="20.500"/>
            </g>
            <g fill="#fffdfd" stroke="#d58080">
              <rect x="737.500" y="335.500" width="42" height="48"/>
              <rect x="734.500" y="405.500" width="40" height="42"/>
              <rect x="475" y="405.500" width="212" height="155.500"/>
            </g>
            <rect x="230.500" y="261.500" width="46" height="40" fill="#fffdfd" stroke="#a87050"/>
            <rect x="513.500" y="230.500" width="104" height="63" fill="none" stroke="#d07a50"/>
            <rect x="678.500" y="476.500" width="38" height="53" fill="none" stroke="#d0606a"/>
            <g fill="#0a0aa8">
              <rect x="223" y="254.500" width="5" height="5"/><rect x="250" y="254.500" width="5" height="5"/><rect x="277" y="254.500" width="5" height="5"/>
              <rect x="223" y="279" width="5" height="5"/><rect x="277" y="279" width="5" height="5"/>
              <rect x="223" y="303" width="5" height="5"/><rect x="250" y="303" width="5" height="5"/><rect x="277" y="303" width="5" height="5"/>
            </g>
            <path d="M251 279.500 255 283.500M255 279.500 251 283.500" stroke="#111" stroke-width="1.300"/>
          </svg>
          <!-- vertical scrollbar -->
          <div class="flex-1 bg-[#f2f2f2] flex flex-col items-center pt-[4px] pb-[6px] justify-between relative">
            <svg width="7" height="5" viewBox="0 0 7 5"><path d="M.5 4.500 3.500 1 6.500 4.500" fill="none" stroke="#555"/></svg>
            <svg width="7" height="5" viewBox="0 0 7 5"><path d="M.5 .5 3.500 4 6.500 .5" fill="none" stroke="#555"/></svg>
            <div class="absolute top-[150px] left-[1px] w-[9px] h-[84px] bg-[#cdcdcd]"></div>
          </div>
        </div>
        <!-- page tabs + horizontal scrollbar -->
        <div class="h-[13px] shrink-0 flex items-center bg-[#f3f3f3] text-[#445] text-[9px]">
          <svg class="ml-[1px] shrink-0" width="7" height="8" viewBox="0 0 7 8"><path d="M.5 .5H6.500V7.500H.5ZM3.500 2V6M1.500 4H5.500" fill="#fff" stroke="#555"/></svg>
          <svg class="ml-[7px] shrink-0" width="5" height="6" viewBox="0 0 5 6"><path d="M.5 0V6M5 0 2 3 5 6Z" fill="#bbb" stroke="#bbb"/></svg>
          <svg class="ml-[6px] shrink-0" width="4" height="6" viewBox="0 0 4 6"><path d="M4 0 0 3 4 6Z" fill="#999"/></svg>
          <span class="ml-[15px] w-[22px] whitespace-nowrap text-[8.500px]">1 of 3</span>
          <svg class="ml-[17px] shrink-0" width="4" height="6" viewBox="0 0 4 6"><path d="M0 0 4 3 0 6Z" fill="#333"/></svg>
          <svg class="ml-[6px] shrink-0" width="5" height="6" viewBox="0 0 5 6"><path d="M0 0 3 3 0 6ZM4.500 0V6" fill="#333" stroke="#333"/></svg>
          <svg class="ml-[6px] shrink-0" width="7" height="8" viewBox="0 0 7 8"><path d="M.5 .5H6.500V7.500H.5ZM3.500 2V6M1.500 4H5.500" fill="#fff" stroke="#555"/></svg>
          <div class="ml-[4px] w-[45px] h-full bg-[#d6e6f6] flex items-center justify-center text-[#26558c] whitespace-nowrap">Page 1</div>
          <div class="w-[41px] h-full flex items-center justify-center border-r border-[#ccc] whitespace-nowrap">Page 2</div>
          <div class="w-[40px] h-full flex items-center justify-center border-r border-[#ccc] whitespace-nowrap">Page 3</div>
          <svg class="ml-[376px] shrink-0" width="4" height="7" viewBox="0 0 4 7"><path d="M3.500 .5 .5 3.500 3.500 6.500" fill="none" stroke="#444"/></svg>
          <div class="ml-[159px] w-[189px] h-[10px] shrink-0 bg-[#cdcdcd]"></div>
          <svg class="ml-[240px] shrink-0" width="4" height="7" viewBox="0 0 4 7"><path d="M.5 .5 3.500 3.500 .5 6.500" fill="none" stroke="#444"/></svg>
          <svg class="ml-[5px] shrink-0" width="9" height="9" viewBox="0 0 9 9"><circle cx="3.500" cy="3.500" r="3" fill="#eee" stroke="#666"/><path d="M6 6 9 9" stroke="#444" stroke-width="1.500"/></svg>
        </div>
      </div>
      <!-- colour palette -->
      <div class="w-[13px] shrink-0 flex flex-col bg-[#f2f2f2] pl-px">
        <div class="h-[26px] flex flex-col items-center justify-end gap-[3px] pb-[2px]">
          <span class="w-[8px] h-[6px] bg-[#bbb]"></span><span class="w-[6px] h-[4px] bg-[#ddd]"></span>
        </div>
        <svg class="shrink-0" width="12" height="12" viewBox="0 0 12 12"><rect x=".5" y=".5" width="11" height="11" fill="#fff" stroke="#666"/><path d="M0 0 12 12M12 0 0 12" stroke="#333"/></svg>
        <div id="palette" class="h-[429px] flex flex-col"></div>
        <div class="flex-1 flex flex-col items-center pt-[4px] gap-[4px]">
          <svg width="7" height="5" viewBox="0 0 7 5"><path d="M.5 .5 3.500 4 6.500 .5" fill="none" stroke="#333"/></svg>
          <svg width="7" height="6" viewBox="0 0 7 6"><path d="M1 0V6M7 0 3 3 7 6Z" fill="#222" stroke="#222"/></svg>
        </div>
      </div>
    </div>
    <!-- document palette -->
    <div class="h-[13px] shrink-0 flex items-center bg-[#f3f3f3]">
      <div class="w-px h-[11px] border-l border-dotted border-[#aaa]"></div>
      <svg class="ml-[7px] shrink-0" width="8" height="8" viewBox="0 0 8 8"><circle cx="4" cy="4" r="3.500" fill="#fff" stroke="#bbb"/><path d="M3 2 6 4 3 6Z" fill="#555"/></svg>
      <svg class="ml-[3px] shrink-0" width="9" height="9" viewBox="0 0 9 9"><path d="M1 8 6 3" stroke="#333" stroke-width="2"/><path d="M5 1 8 4" stroke="#333" stroke-width="2"/></svg>
      <svg class="ml-[2px] shrink-0" width="11" height="12" viewBox="0 0 11 12"><rect x=".5" y=".5" width="10" height="11" fill="#fff" stroke="#666"/><path d="M0 0 11 12M11 0 0 12" stroke="#555"/></svg>
      <div class="flex h-[12px] border-y border-r border-[#999]">
        <div class="w-[12px] bg-[#000]"></div><div class="w-[11px] bg-[#444]"></div><div class="w-[11px] bg-[#ed1c24]"></div><div class="w-[12px] bg-[#ccc]"></div><div class="w-[11px] bg-[#a0a0a0]"></div><div class="w-[11px] bg-white"></div><div class="w-[11px] bg-[#fff200]"></div>
      </div>
    </div>
  </div>
</div>

<!-- status bar -->
<div class="flex-1 bg-[#f1f1f1] border-t border-[#d0d0d0] text-[7px] text-[#444] flex flex-col">
  <div class="h-[14px] flex items-center">
    <span class="ml-[3px] w-[77px] text-[7.500px] whitespace-nowrap">( 0.114 , 6.710 )</span>
    <svg class="shrink-0" width="3" height="5" viewBox="0 0 3 5"><path d="M0 0 3 2.500 0 5Z" fill="#222"/></svg>
    <span class="ml-[453px] w-[480px] text-[7.500px] whitespace-nowrap">Rectangle on Desktop</span>
    <svg class="ml-[52px] shrink-0" width="9" height="9" viewBox="0 0 9 9"><rect width="9" height="7" fill="#aab"/><rect x="3" y="2" width="3" height="3" fill="#dde"/><rect x="1" y="7" width="7" height="2" fill="#889"/></svg>
    <svg class="ml-[41px] shrink-0" width="11" height="11" viewBox="0 0 11 11"><path d="M1 6 5.500 1.500 10 6 5.500 10Z" fill="#fff" stroke="#665"/><path d="M2 7H9L5.500 10Z" fill="#d88b30"/></svg>
    <div class="ml-[4px] w-[12px] h-[11px] shrink-0 bg-white border border-[#aaa]"></div>
    <span class="ml-[2px] w-[50px] shrink-0 whitespace-nowrap">C:0 M:0 Y:0 K:0</span>
    <svg class="ml-[67px] mt-[4px] shrink-0" width="12" height="13" viewBox="0 0 12 13"><circle cx="5" cy="4" r="3" fill="#d94a30"/><path d="M0 12C0 8 10 8 10 12Z" fill="#c23a20"/><path d="M9 13H12V10Z" fill="#111"/></svg>
  </div>
  <div class="h-[14px] flex items-center">
    <span class="ml-[3px] w-[370px] text-[7.100px] whitespace-nowrap">Document color profiles: RGB: sRGB IEC61966-2.1; CMYK: U.S. Web Coated (SWOP) v2; Grayscale: Dot Gain 20%</span>
    <svg class="shrink-0" width="3" height="5" viewBox="0 0 3 5"><path d="M0 0 3 2.500 0 5Z" fill="#222"/></svg>
    <svg class="ml-[745px] shrink-0" width="7" height="11" viewBox="0 0 7 11"><path d="M3.500 0 6 6V8H1V6ZM0 10H7" fill="#fff" stroke="#555"/></svg>
    <div class="ml-[7px] w-[12px] h-[11px] shrink-0 bg-[#ff0000]"></div>
    <span class="ml-[2px] whitespace-nowrap">R:255 G:0 B:0 (#FF0000)&nbsp; Hairline</span>
  </div>
</div>

<script>
// rulers are just repeated ticks, no point writing them out by hand
const pxPerInch = 43.3;
const ns = 'http://www.w3.org/2000/svg';
function add(parent, tag, attrs, text) {
  const el = document.createElementNS(ns, tag);
  for (const k in attrs) el.setAttribute(k, attrs[k]);
  if (text !== undefined) el.textContent = text;
  parent.appendChild(el);
}
const hr = document.getElementById('hruler');
add(hr, 'path', { d: 'M37 192.500H1280', stroke: '#bbb' });
for (let i = -1; i < 28 * 8; i++) {
  const x = Math.round(46 + i * pxPerInch / 8) + 0.5;
  if (x > 1240) break;
  const major = i % 8 === 0;
  add(hr, 'path', { d: `M${x} ${major ? 186 : (i % 4 === 0 ? 190 : 191)}V192`, stroke: major ? '#555' : '#999' });
  if (major) add(hr, 'text', { x, y: 186, 'text-anchor': 'middle', 'font-size': 7.5, fill: '#555' }, i / 8);
}
add(hr, 'text', { x: 1255, y: 186, 'text-anchor': 'middle', 'font-size': 6.5, fill: '#555' }, 'inches');
add(hr, 'path', { d: 'M27 184H34M30 181V188', stroke: '#888', 'stroke-dasharray': '1 1' });

const vr = document.getElementById('vruler');
add(vr, 'path', { d: 'M36.500 193V664', stroke: '#bbb' });
for (let i = -30; i <= 8 * 8; i++) {
  const y = Math.round(501 - i * pxPerInch / 8) + 0.5;
  if (y < 194 || y > 650) continue;
  const major = i % 8 === 0;
  add(vr, 'path', { d: `M${major ? 32 : (i % 4 === 0 ? 34 : 35)} ${y}H36`, stroke: major ? '#555' : '#999' });
  if (major) add(vr, 'text', { x: 30, y, transform: `rotate(-90 30 ${y})`, 'text-anchor': 'middle', 'font-size': 7.5, fill: '#555' }, Math.abs(i / 8));
}
add(vr, 'text', { x: 32, y: 666, transform: 'rotate(-90 32 666)', 'font-size': 6.5, fill: '#555' }, 'inches');

const colours = ['#000000','#4a4a4a','#5c5c5c','#6f6f6f','#7f7f7f','#8f8f8f','#a0a0a0','#b3b3b3','#cccccc','#e0e0e0','#ffffff','#2e3192','#00aeef','#00a651','#fff200','#ed1c24','#ec008c','#9e3b8e','#f58220','#f4a3a8','#8b6f68','#c3bcdc','#9c93c8','#6d8cc8','#7a6cb0','#6f6a94','#4a6491','#4d4a72','#5e7ea0','#0f9ee0','#88d0f5','#a3c4d8','#8a9faa','#6f858a','#4a5f63','#47706a','#378577','#5d8f8c'];
const pal = document.getElementById('palette');
colours.forEach(c => {
  const d = document.createElement('div');
  d.className = 'flex-1';
  d.style.background = c;
  if (c === '#fff200') d.style.outline = '1px solid #222', d.style.outlineOffset = '-2px';
  pal.appendChild(d);
});
</script>
</body>
</html>
